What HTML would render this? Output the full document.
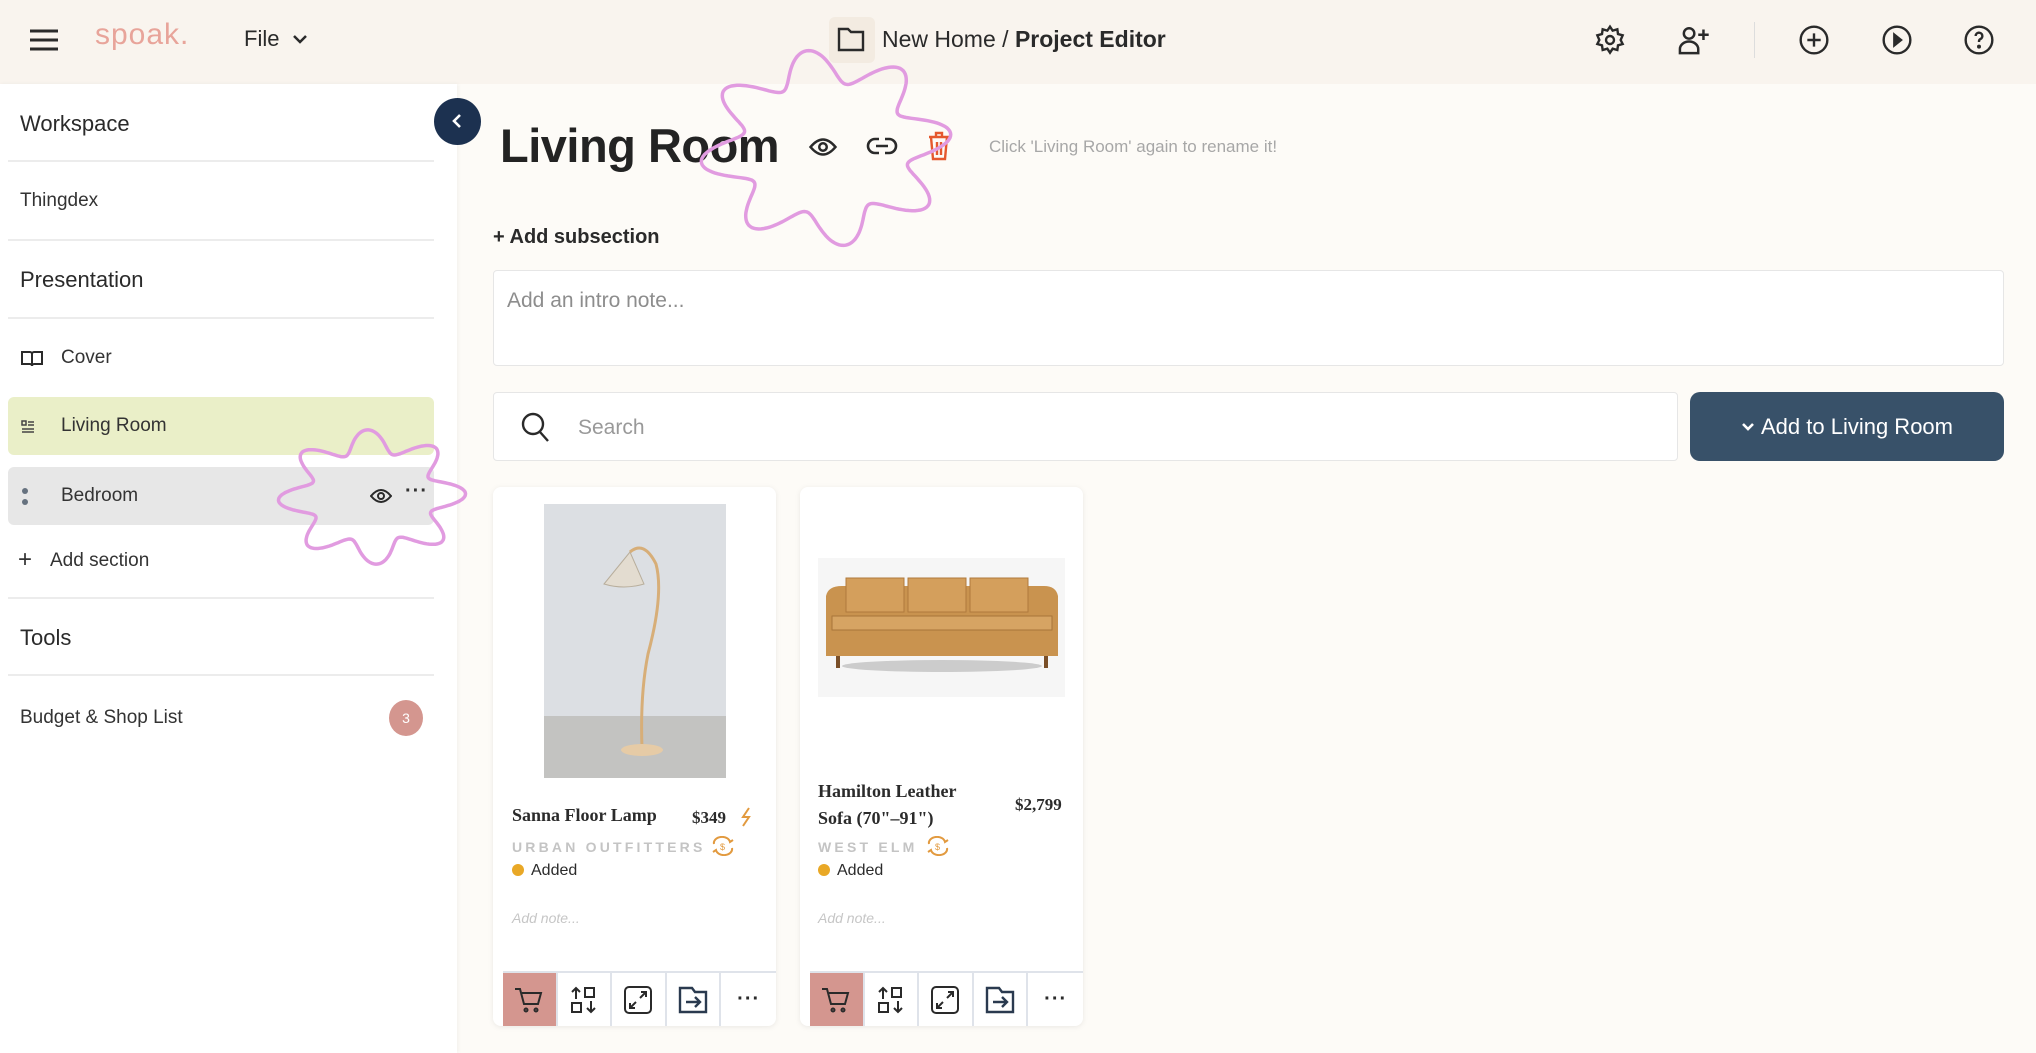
<!DOCTYPE html>
<html><head><meta charset="utf-8"><style>
*{box-sizing:border-box;margin:0;padding:0}
body{width:2036px;height:1053px;overflow:hidden;background:#fdfbf7;font-family:"Liberation Sans",sans-serif;color:#2b2b2b;position:relative}
.a{position:absolute}
.top{left:0;top:0;width:2036px;height:84px;background:#f9f4ee}
.side{left:0;top:84px;width:457px;height:969px;background:#fff;box-shadow:1px 0 4px rgba(0,0,0,.05)}
.hr{position:absolute;left:8px;width:426px;height:2px;background:#ececec}
.h{font-size:22px;font-weight:500;color:#2a2a2a;left:20px}
.it{font-size:19px;color:#333;left:20px}
.card{background:#fff;border-radius:8px;box-shadow:0 1px 6px rgba(0,0,0,.08);overflow:hidden}
.nm{font-family:"Liberation Serif",serif;font-weight:bold;font-size:18px;color:#2b2b2b}
.st{font-size:14px;letter-spacing:3.2px;color:#c4c4c4;font-weight:bold}
.ad{font-size:16px;color:#2b2b2b}
.dot{display:inline-block;width:12px;height:12px;border-radius:50%;background:#e9a826;margin-right:7px;vertical-align:-1px}
.note{font-size:14px;font-style:italic;color:#c6c6c6}
.tb{top:484px;height:55px;border-top:2px solid #dfe3ea;display:flex}
.tb div{width:54.6px;height:53px;border-right:2px solid #dfe3ea;display:flex;align-items:center;justify-content:center}
.tb div:first-child{background:#d4968f}
.tb div:last-child{border-right:none}
</style></head><body>
<div class="a top"></div>
<svg class="a" style="left:28px;top:28px" width="32" height="24" viewBox="0 0 32 24"><path d="M2 3H30M2 12H30M2 21H30" stroke="#2a2a2a" stroke-width="3"/></svg>
<div class="a" style="left:95px;top:18px;font-size:30px;color:#e8a49a;letter-spacing:1px">spoak.</div>
<div class="a" style="left:244px;top:26px;font-size:22px;font-weight:500;color:#2a2a2a">File</div>
<svg class="a" style="left:292px;top:33px" width="16" height="12" viewBox="0 0 16 12"><path d="M2 3l6 6 6-6" stroke="#2a2a2a" stroke-width="2.5" fill="none"/></svg>
<div class="a" style="left:829px;top:17px;width:46px;height:46px;border-radius:6px;background:#f3ebe1"></div>
<svg class="a" style="left:836px;top:25px" width="30" height="28" viewBox="0 0 30 28"><path d="M3 4h9l3 3h12v18H3z" stroke="#2a2a2a" stroke-width="2.4" fill="none"/></svg>
<div class="a" style="left:882px;top:26px;font-size:23px;color:#2a2a2a">New Home / <b>Project Editor</b></div>
<svg class="a" style="left:1594px;top:24px" width="32" height="32" viewBox="0 0 24 24" fill="none" stroke="#2a2a2a" stroke-width="1.8"><circle cx="12" cy="12" r="3"/><path d="M12 2l2 3 3.5-1 .5 3.5 3.5 1-1.5 3.5 1.5 3-3.5 1-.5 3.5-3.5-1-2 3-2-3-3.5 1-.5-3.5-3.5-1L4 12 2.5 8.5 6 7.5 6.5 4 10 5z"/></svg>
<svg class="a" style="left:1676px;top:24px" width="34" height="32" viewBox="0 0 26 24" fill="none" stroke="#2a2a2a" stroke-width="1.9"><circle cx="10" cy="7" r="4"/><path d="M3 22v-3a6 5 0 0 1 14 0v3zM21 4v8M17 8h8"/></svg>
<div class="a" style="left:1754px;top:22px;width:1px;height:36px;background:#ddd"></div>
<svg class="a" style="left:1798px;top:24px" width="32" height="32" viewBox="0 0 24 24" fill="none" stroke="#2a2a2a" stroke-width="1.8"><circle cx="12" cy="12" r="10"/><path d="M12 7v10M7 12h10"/></svg>
<svg class="a" style="left:1881px;top:24px" width="32" height="32" viewBox="0 0 24 24" fill="none" stroke="#2a2a2a" stroke-width="1.8"><circle cx="12" cy="12" r="10"/><path d="M10 8l5 4-5 4z" fill="#2a2a2a"/></svg>
<svg class="a" style="left:1963px;top:24px" width="32" height="32" viewBox="0 0 24 24" fill="none" stroke="#2a2a2a" stroke-width="1.8"><circle cx="12" cy="12" r="10"/><path d="M9.5 9a2.5 2.5 0 1 1 3.5 2.3c-.8.4-1 1-1 1.7v.5"/><circle cx="12" cy="17" r=".6" fill="#2a2a2a"/></svg>

<div class="a side"></div>
<div class="a h" style="top:111px">Workspace</div>
<div class="hr" style="top:160px"></div>
<div class="a it" style="top:190px">Thingdex</div>
<div class="hr" style="top:239px"></div>
<div class="a h" style="top:267px">Presentation</div>
<div class="hr" style="top:317px"></div>
<svg class="a" style="left:20px;top:350px" width="24" height="18" viewBox="0 0 24 18" fill="none" stroke="#2a2a2a" stroke-width="2"><path d="M2 2h8a2 2 0 0 1 2 2v12a2 2 0 0 0-2-2H2zM22 2h-8a2 2 0 0 0-2 2v12a2 2 0 0 1 2-2h8z"/></svg>
<div class="a it" style="left:61px;top:347px">Cover</div>
<div class="a" style="left:8px;top:397px;width:426px;height:58px;border-radius:6px;background:#eaefc8"></div>
<svg class="a" style="left:21px;top:420px" width="14" height="14" viewBox="0 0 14 14" fill="none" stroke="#444" stroke-width="1.5"><rect x="1" y="1" width="4" height="4"/><path d="M7 2h6M7 5h6M1 9h12M1 12h12"/></svg>
<div class="a it" style="left:61px;top:415px">Living Room</div>
<div class="a" style="left:8px;top:467px;width:426px;height:58px;border-radius:6px;background:#e7e7e7"></div>
<div class="a" style="left:22px;top:488px;width:6px;height:6px;border-radius:50%;background:#66727f"></div>
<div class="a" style="left:22px;top:499px;width:6px;height:6px;border-radius:50%;background:#66727f"></div>
<div class="a it" style="left:61px;top:485px">Bedroom</div>
<svg class="a" style="left:370px;top:488px" width="22" height="16" viewBox="0 0 22 16" fill="none" stroke="#2a2a2a" stroke-width="2"><path d="M1 8q10-12 20 0q-10 12-20 0z"/><circle cx="11" cy="8" r="3"/></svg>
<div class="a" style="left:405px;top:480px;font-size:20px;font-weight:bold;letter-spacing:1px;color:#333">···</div>
<div class="a" style="left:18px;top:546px;font-size:24px;color:#333">+</div>
<div class="a it" style="left:50px;top:550px;font-weight:500">Add section</div>
<div class="hr" style="top:597px"></div>
<div class="a h" style="top:625px">Tools</div>
<div class="hr" style="top:674px"></div>
<div class="a it" style="top:707px">Budget &amp; Shop List</div>
<div class="a" style="left:389px;top:700px;width:34px;height:36px;border-radius:50%;background:#d4968f;color:#fff;font-size:14px;text-align:center;line-height:36px">3</div>
<div class="a" style="left:434px;top:98px;width:47px;height:47px;border-radius:50%;background:#1c3150"></div>
<svg class="a" style="left:450px;top:112px" width="14" height="18" viewBox="0 0 14 18"><path d="M10 3L4 9l6 6" stroke="#fff" stroke-width="2.6" fill="none"/></svg>

<div class="a" style="left:500px;top:118px;font-size:47px;font-weight:bold;color:#232323;letter-spacing:-0.5px">Living Room</div>
<svg class="a" style="left:808px;top:137px" width="30" height="20" viewBox="0 0 22 16" fill="none" stroke="#2a2a2a" stroke-width="2"><path d="M1 8q10-12 20 0q-10 12-20 0z"/><circle cx="11" cy="8" r="3"/></svg>
<svg class="a" style="left:866px;top:134px" width="32" height="24" viewBox="0 0 32 24" fill="none" stroke="#2a2a2a" stroke-width="2.6"><path d="M13 5H9a7 7 0 0 0 0 14h4M19 5h4a7 7 0 0 1 0 14h-4M10 12h12"/></svg>
<svg class="a" style="left:927px;top:130px" width="24" height="32" viewBox="0 0 24 32" fill="none" stroke="#e5582e" stroke-width="2.4"><path d="M2 7h20M9 7V3h6v4M4 7l2 22h12l2-22M10 12v13M14 12v13"/></svg>
<div class="a" style="left:989px;top:137px;font-size:17px;color:#a7a7a7">Click 'Living Room' again to rename it!</div>
<div class="a" style="left:493px;top:226px;font-size:20px;font-weight:bold;color:#2a2a2a">+ Add subsection</div>
<div class="a" style="left:493px;top:270px;width:1511px;height:96px;background:#fff;border:1.5px solid #e6e6e6;border-radius:4px"></div>
<div class="a" style="left:507px;top:289px;font-size:21px;color:#8d8d8d">Add an intro note...</div>
<div class="a" style="left:493px;top:392px;width:1185px;height:69px;background:#fff;border:1.5px solid #e6e6e6;border-radius:4px"></div>
<svg class="a" style="left:520px;top:411px" width="32" height="34" viewBox="0 0 32 34" fill="none" stroke="#2a2a2a" stroke-width="2.4"><circle cx="13" cy="13" r="10"/><path d="M20 21l8 9"/></svg>
<div class="a" style="left:578px;top:416px;font-size:21px;color:#999">Search</div>
<div class="a" style="left:1690px;top:392px;width:314px;height:69px;background:#385169;border-radius:10px;color:#fff;font-size:22px;font-weight:500;text-align:center;line-height:69px">
<svg width="14" height="10" viewBox="0 0 14 10" style="vertical-align:2px;margin-right:6px"><path d="M2 2l5 5 5-5" stroke="#fff" stroke-width="2.6" fill="none"/></svg>Add to Living Room</div>

<div class="a card" style="left:493px;top:487px;width:283px;height:539px">
 <svg class="a" style="left:51px;top:17px" width="182" height="274" viewBox="0 0 182 274">
  <rect width="182" height="274" fill="#dcdfe3"/><rect y="212" width="182" height="62" fill="#c3c3c1"/>
  <path d="M60 80 L86 48 L100 80 Q80 86 60 80z" fill="#e3dcd0" stroke="#b8ae9c"/>
  <path d="M86 48 Q100 36 112 60 Q120 90 104 150 Q96 190 98 244" stroke="#d7ae78" stroke-width="3" fill="none"/>
  <ellipse cx="98" cy="246" rx="21" ry="6" fill="#e6cba6"/>
 </svg>
 <div class="a nm" style="left:19px;top:318px">Sanna Floor Lamp</div>
 <div class="a nm" style="left:199px;top:321px;font-size:17px">$349</div>
 <svg class="a" style="left:246px;top:320px" width="14" height="20" viewBox="0 0 14 20" fill="none" stroke="#e29a3f" stroke-width="2"><path d="M10 1L4 10h6l-6 9"/></svg>
 <div class="a st" style="left:19px;top:352px">URBAN OUTFITTERS</div>
 <svg class="a" style="left:218px;top:349px" width="24" height="20" viewBox="0 0 24 20" fill="none" stroke="#e29a3f" stroke-width="2"><path d="M3 8a8 6 0 0 1 16-2l3-2M21 12a8 6 0 0 1-16 2l-3 2"/><text x="9" y="14" font-size="9" fill="#e29a3f" stroke="none" font-family="Liberation Sans">$</text></svg>
 <div class="a ad" style="left:19px;top:375px"><span class="dot"></span>Added</div>
 <div class="a note" style="left:19px;top:423px">Add note...</div>
 <div class="a tb" style="left:10px;width:273px">
  <div><svg width="30" height="28" viewBox="0 0 30 28" fill="none" stroke="#2a2a2a" stroke-width="2"><path d="M1 3h5l4 15h14l3-11H8"/><circle cx="12" cy="24" r="1.5"/><circle cx="22" cy="24" r="1.5"/></svg></div>
  <div><svg width="30" height="30" viewBox="0 0 30 30" fill="none" stroke="#2a2a2a" stroke-width="2"><path d="M7 14V3M3 7l4-4 4 4M22 16v11M18 23l4 4 4-4"/><rect x="16" y="3" width="9" height="9"/><rect x="3" y="18" width="9" height="9"/></svg></div>
  <div><svg width="30" height="30" viewBox="0 0 30 30" fill="none" stroke="#2a2a2a" stroke-width="2"><rect x="2" y="2" width="26" height="26" rx="4"/><path d="M17 13l6-6M18 7h5v5M13 17l-6 6M7 18v5h5"/></svg></div>
  <div><svg width="30" height="30" viewBox="0 0 30 30" fill="none" stroke="#2a3a4f" stroke-width="2.4"><path d="M2 3h12l3 4h11v20H2z"/><path d="M8 17h14M17 12l5 5-5 5"/></svg></div>
  <div><span style="font-size:20px;font-weight:bold;letter-spacing:1px">···</span></div>
 </div>
</div>
<div class="a card" style="left:800px;top:487px;width:283px;height:539px">
 <svg class="a" style="left:18px;top:71px" width="247" height="139" viewBox="0 0 247 139">
  <rect width="247" height="139" fill="#f6f6f6"/>
  <ellipse cx="124" cy="108" rx="100" ry="6" fill="#ccc"/>
  <path d="M8 38 Q10 28 24 28 H226 Q238 28 240 38 V98 H8z" fill="#c9934f"/>
  <path d="M28 20h58v34H28zM90 20h58v34H90zM152 20h58v34h-58z" fill="#d49f5c" stroke="#b07a3c"/>
  <path d="M14 58h220v14H14z" fill="#d6a463" stroke="#a8753a"/>
  <path d="M20 98v12M228 98v12" stroke="#7a4f28" stroke-width="4"/>
 </svg>
 <div class="a nm" style="left:18px;top:291px;line-height:27px">Hamilton Leather<br>Sofa (70"–91")</div>
 <div class="a nm" style="left:215px;top:308px;font-size:17px">$2,799</div>
 <div class="a st" style="left:18px;top:352px">WEST ELM</div>
 <svg class="a" style="left:126px;top:349px" width="24" height="20" viewBox="0 0 24 20" fill="none" stroke="#e29a3f" stroke-width="2"><path d="M3 8a8 6 0 0 1 16-2l3-2M21 12a8 6 0 0 1-16 2l-3 2"/><text x="9" y="14" font-size="9" fill="#e29a3f" stroke="none" font-family="Liberation Sans">$</text></svg>
 <div class="a ad" style="left:18px;top:375px"><span class="dot"></span>Added</div>
 <div class="a note" style="left:18px;top:423px">Add note...</div>
 <div class="a tb" style="left:10px;width:273px">
  <div><svg width="30" height="28" viewBox="0 0 30 28" fill="none" stroke="#2a2a2a" stroke-width="2"><path d="M1 3h5l4 15h14l3-11H8"/><circle cx="12" cy="24" r="1.5"/><circle cx="22" cy="24" r="1.5"/></svg></div>
  <div><svg width="30" height="30" viewBox="0 0 30 30" fill="none" stroke="#2a2a2a" stroke-width="2"><path d="M7 14V3M3 7l4-4 4 4M22 16v11M18 23l4 4 4-4"/><rect x="16" y="3" width="9" height="9"/><rect x="3" y="18" width="9" height="9"/></svg></div>
  <div><svg width="30" height="30" viewBox="0 0 30 30" fill="none" stroke="#2a2a2a" stroke-width="2"><rect x="2" y="2" width="26" height="26" rx="4"/><path d="M17 13l6-6M18 7h5v5M13 17l-6 6M7 18v5h5"/></svg></div>
  <div><svg width="30" height="30" viewBox="0 0 30 30" fill="none" stroke="#2a3a4f" stroke-width="2.4"><path d="M2 3h12l3 4h11v20H2z"/><path d="M8 17h14M17 12l5 5-5 5"/></svg></div>
  <div><span style="font-size:20px;font-weight:bold;letter-spacing:1px">···</span></div>
 </div>
</div>

<svg class="a" style="left:0;top:0" width="2036" height="1053" viewBox="0 0 2036 1053" fill="none" stroke="#e19be0" stroke-width="3.5">
<path id="s1"/><path id="s2"/>
</svg>
<script>
function star(cx,cy,rx,ry,amp,n,rot){var d='';for(var i=0;i<=360;i++){var t=i*Math.PI/180;var r=1+amp*Math.cos(n*t+rot);var x=cx+rx*r*Math.cos(t),y=cy+ry*r*Math.sin(t);d+=(i?'L':'M')+x.toFixed(1)+' '+y.toFixed(1);}return d+'Z';}
document.getElementById('s1').setAttribute('d',star(826,148,105,82,0.2,8,1.2));
document.getElementById('s2').setAttribute('d',star(372,497,78,56,0.2,8,0.4));
</script>
</body></html>
